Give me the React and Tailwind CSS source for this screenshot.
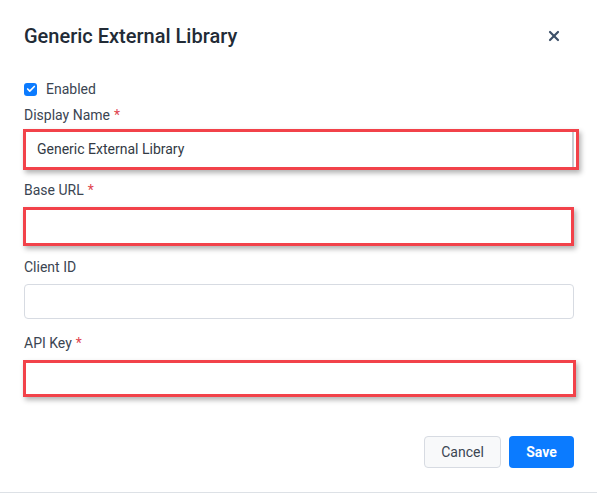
import { X, Check } from 'lucide-react'

// Field label with optional required marker
function Label({ children, required, className = '' }) {
  return (
    <div className={`h-5 text-[14px] leading-5 text-[#3b4552] ${className}`}>
      {children}
      {required && <span className="ml-1 text-[#e0454f]">*</span>}
    </div>
  )
}

export default function App() {
  return (
    <div className="w-[597px] h-[493px] bg-white font-['Roboto','Liberation_Sans',sans-serif]">
      <div className="flex flex-col pl-6 pr-[23px] pt-6 pb-6 h-full border-b border-[#dde1e6]">
        {/* Header */}
        <div className="flex items-center justify-between h-6">
          <h2 className="text-[20px] leading-6 font-medium text-[#222b36]">Generic External Library</h2>
          <button className="flex items-center justify-center w-4 h-4 mr-3 text-[#3d5068]">
            <X size={16} strokeWidth={3.2} />
          </button>
        </div>

        {/* Enabled */}
        <label className="flex items-center gap-[9px] h-5 mt-[31px]">
          <span className="flex items-center justify-center w-[13px] h-[13px] rounded-[3px] bg-[#0b7bff] text-white">
            <Check size={10} strokeWidth={4} />
          </span>
          <span className="text-[14px] leading-5 text-[#3b4552]">Enabled</span>
        </label>

        {/* Display Name */}
        <Label required className="mt-[6px]">Display Name</Label>
        <div className="mt-1 -ml-px w-[556px] h-[41px] border-[3px] border-[#f2424a] shadow-[2px_3px_5px_rgba(0,0,0,0.3)] bg-white">
          <div className="w-[548px] h-full border-r-2 border-[#c9cdd2] flex items-center pl-[11px] text-[14px] text-[#333a44]">
            Generic External Library
          </div>
        </div>

        {/* Base URL */}
        <Label required className="mt-[10px]">Base URL</Label>
        <div className="mt-[7px] -ml-px w-[551px] h-[39px] border-[3px] border-[#f2424a] shadow-[2px_3px_5px_rgba(0,0,0,0.3)] bg-white" />

        {/* Client ID */}
        <Label className="mt-[11px]">Client ID</Label>
        <div className="mt-[7px] w-[550px] h-[35px] rounded border border-[#d7dbe2] bg-white" />

        {/* API Key */}
        <Label required className="mt-[14px]">API Key</Label>
        <div className="mt-[7px] -ml-px w-[553px] h-[37px] border-[3px] border-[#f2424a] shadow-[2px_3px_5px_rgba(0,0,0,0.3)] bg-white" />

        {/* Footer */}
        <div className="flex justify-end gap-2 mt-[39px]">
          <button className="w-[77px] h-8 rounded border border-[#d7dbe2] bg-[#f8f9fa] text-[14px] text-[#3b4552]">
            Cancel
          </button>
          <button className="w-[65px] h-8 rounded bg-[#0b7bff] text-[14px] font-bold text-white">
            Save
          </button>
        </div>
      </div>
    </div>
  )
}
